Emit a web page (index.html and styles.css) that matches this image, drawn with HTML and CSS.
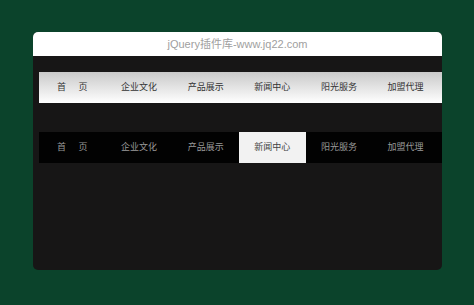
FILE: index.html
```html
<!DOCTYPE html>
<html lang="zh-CN">
<head>
    <meta charset="UTF-8">
    <title>jQuery插件库-www.jq22.com</title>
    <link rel="stylesheet" href="styles.css">
</head>
<body>
    <div class="card">
        <div class="card-title">jQuery插件库-www.jq22.com</div>
        <div class="card-body">
            <ul class="nav nav-light">
                <li>首&nbsp;&nbsp;&nbsp;&nbsp;&nbsp;页</li>
                <li>企业文化</li>
                <li>产品展示</li>
                <li>新闻中心</li>
                <li>阳光服务</li>
                <li>加盟代理</li>
            </ul>

            <ul class="nav nav-dark">
                <li>首&nbsp;&nbsp;&nbsp;&nbsp;&nbsp;页</li>
                <li>企业文化</li>
                <li>产品展示</li>
                <li class="active">新闻中心</li>
                <li>阳光服务</li>
                <li>加盟代理</li>
            </ul>
        </div>
    </div>
</body>
</html>
```

FILE: styles.css
```css
body {
    margin: 0;
    padding: 32px 0 0 33px;
    background-color: #0b432b;
    font-family: 'Liberation Sans', 'Noto Sans CJK SC', sans-serif;
    height: 305px;
    box-sizing: border-box;
    overflow: hidden;
}
.card {
    width: 409px;
    border-radius: 5px;
    overflow: hidden;
    background-color: #171616;
}
.card-title {
    height: 24px;
    line-height: 24px;
    background-color: #fff;
    color: #a0a0a0;
    font-size: 11px;
    text-align: center;
}
.card-body {
    height: 214px;
    padding: 16px 0 0 6px;
    box-sizing: border-box;
}
.nav {
    list-style: none;
    margin: 0;
    padding: 0;
    display: flex;
    height: 31px;
}
.nav li {
    flex: 0 0 66.67px;
    line-height: 31px;
    text-align: center;
    font-size: 9px;
}
.nav-light {
    background: linear-gradient(to bottom, #c9c9c9, #ffffff);
    color: #333;
}
.nav-dark {
    margin-top: 29px;
    background-color: #020202;
    color: #9a9a9a;
}
.nav-dark .active {
    background-color: #f2f2f2;
    color: #444;
}
```
